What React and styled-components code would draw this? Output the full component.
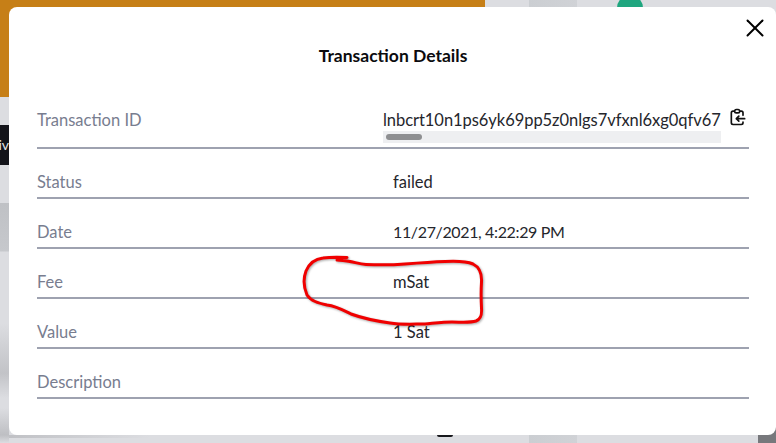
import React from 'react'
import styled, {createGlobalStyle} from 'styled-components'
import {HiOutlineClipboardCopy} from 'react-icons/hi'
import {X} from 'lucide-react'

const GlobalStyle = createGlobalStyle`
    html, body {
        margin : 0;
        height : 100%;
        overflow : hidden;
        background : #dcdde1;
        font-family : "Lato", "Liberation Sans", sans-serif;
    }
`

const rows = [
    {label : 'Status', value : 'failed'},
    {label : 'Date', value : '11/27/2021, 4:22:29 PM', numeric : true},
    {label : 'Fee', value : 'mSat'},
    {label : 'Value', value : '1 Sat'},
    {label : 'Description', value : ''},
]

function App() {
    return (
        <>
        <GlobalStyle />
        <Page>
            <Hero />
            <Band />
            <Avatar />
            <LeftRail>
                <Tab>Activ</Tab>
                <SideShade />
            </LeftRail>
            <Footer>
                <BottomShade />
                <Knob />
            </Footer>
            <Corner />
        </Page>
        <Modal>
            <CloseButton aria-label="Close"><X size={30} strokeWidth={1.6} /></CloseButton>
            <Title>Transaction Details</Title>
            <IdRow>
                <Label>Transaction ID</Label>
                <IdValue>
                    <IdText>lnbcrt10n1ps6yk69pp5z0nlgs7vfxnl6xg0qfv67</IdText>
                    <Track><Thumb /></Track>
                </IdValue>
                <CopyButton aria-label="Copy"><HiOutlineClipboardCopy size={20} /></CopyButton>
            </IdRow>
            {rows.map(row => (
                <Row key={row.label}>
                    <Label>{row.label}</Label>
                    <Value $numeric={row.numeric}>{row.value}</Value>
                </Row>
            ))}
        </Modal>
        <Scribble viewBox="0 0 776 443">
            <path d="M347 257.5 C338 257 330 257 323 258 C314 259 309 264 306 271 C303 279 304 288 307 295 C311 301 318 303 327 305 C336 306 343 310 351 314 C362 318 376 321 390 323 C402 325 414 324 425 324 C436 323 444 322 452 322 C461 322 470 323 476 321 C481 319 482 315 481.5 308 C481 299 481 290 481.5 282 C482 273 479 267 473 264 C466 261 455 261 445 261.5 C432 262 418 263 405 264 C392 265 378 265 366 264.5 C358 264 352 261 343 260.5 C341 260 339 260 337 260" />
        </Scribble>
        </>
    )
}

const Page = styled.div`
    position : fixed;
    inset : 0;
    overflow : hidden;
    display : grid;
    grid-template-columns : 9px 476px 44px 48px 40px 26px 115px 18px;
    grid-template-rows : 97px 328px 18px;
    background : #dcdde1;
`
const Hero = styled.div`
    grid-column : 1 / 3;
    grid-row : 1;
    background : #c67f17;
`
const Band = styled.div`
    grid-column : 4;
    grid-row : 1 / 4;
    background : linear-gradient(90deg, #cbced2, #d0d2d6);
`
const Avatar = styled.div`
    grid-column : 6;
    grid-row : 1;
    height : 26px;
    margin-top : -5px;
    border-radius : 50%;
    background : #1fa67f;
`
const LeftRail = styled.div`
    grid-column : 1;
    grid-row : 2 / 4;
    display : flex;
    flex-direction : column;
    gap : 38px;
    padding-top : 28px;
    min-width : 0;
`
const Tab = styled.div`
    display : flex;
    justify-content : flex-end;
    height : 40px;
    line-height : 40px;
    overflow : hidden;
    white-space : nowrap;
    background : #13141a;
    color : #e4e4e6;
    font-size : 14px;
`
const SideShade = styled.div`
    flex : 1;
    background : linear-gradient(180deg, #bfc1c5 0, #c6c8cc 48px, #dcdde1 49px, #dcdde1 120px, #c2c3c7 170px, #dcdde1 195px, #dcdde1 205px, #bebfc3 232px, #dcdde1 240px);
`
const Footer = styled.div`
    grid-column : 2;
    grid-row : 3;
    display : flex;
    justify-content : space-between;
    align-items : flex-start;
    padding : 10px 32px 0 0;
`
const BottomShade = styled.div`
    width : 141px;
    height : 3px;
    background : linear-gradient(90deg, #c0c1c5, #dcdde1);
`
const Knob = styled.div`
    width : 16px;
    height : 2px;
    border-radius : 0 0 4px 4px;
    background : #17181c;
`
const Corner = styled.div`
    grid-column : 8;
    grid-row : 3;
    background : #77787c;
`
const Modal = styled.div`
    position : fixed;
    left : 9px;
    top : 7px;
    width : 767px;
    height : 428px;
    box-sizing : border-box;
    padding : 0 27px 0 28px;
    border-radius : 8px;
    background : white;
`
const CloseButton = styled.button`
    position : absolute;
    right : 6px;
    top : 6px;
    display : flex;
    padding : 0;
    border : none;
    background : none;
    color : #000;
`
const Title = styled.h2`
    margin : 0;
    padding-top : 38px;
    height : 64px;
    font-size : 17.5px;
    line-height : 22px;
    font-weight : 700;
    text-align : center;
    color : #0b0b0e;
`
const Row = styled.div`
    display : grid;
    grid-template-columns : 356px 1fr;
    align-items : end;
    height : 50px;
    box-sizing : border-box;
    padding-bottom : 4px;
    border-bottom : 2px solid #9ea2b0;
    font-size : 16.5px;
    line-height : 22px;
`
const IdRow = styled(Row)`
    grid-template-columns : 346px 338px 1fr;
    align-items : start;
    height : 40px;
    padding-bottom : 0;
`
const Label = styled.div`
    color : #787d8f;
`
const Value = styled.div`
    color : #25262c;
    font-size : ${props => props.$numeric ? '16px' : 'inherit'};
    letter-spacing : ${props => props.$numeric ? '-0.36px' : 'normal'};
`
const IdValue = styled.div`
    min-width : 0;
`
const IdText = styled.div`
    color : #25262c;
    white-space : nowrap;
    letter-spacing : -0.05px;
`
const Track = styled.div`
    height : 12px;
    padding : 3px;
    box-sizing : border-box;
    background : #eeeff1;
`
const Thumb = styled.div`
    width : 36px;
    height : 6px;
    border-radius : 3px;
    background : #8e8f91;
`
const CopyButton = styled.button`
    display : flex;
    justify-self : end;
    margin : -2px 1px 0 0;
    padding : 0;
    border : none;
    background : none;
    color : #111;
`
const Scribble = styled.svg`
    position : fixed;
    left : 0;
    top : 0;
    width : 776px;
    height : 443px;
    pointer-events : none;
    filter : drop-shadow(1px 1px 1px rgba(0,0,0,0.35));
    path {
        fill : none;
        stroke : #f00000;
        stroke-width : 3;
        stroke-linecap : round;
        stroke-linejoin : round;
    }
`
export default App
